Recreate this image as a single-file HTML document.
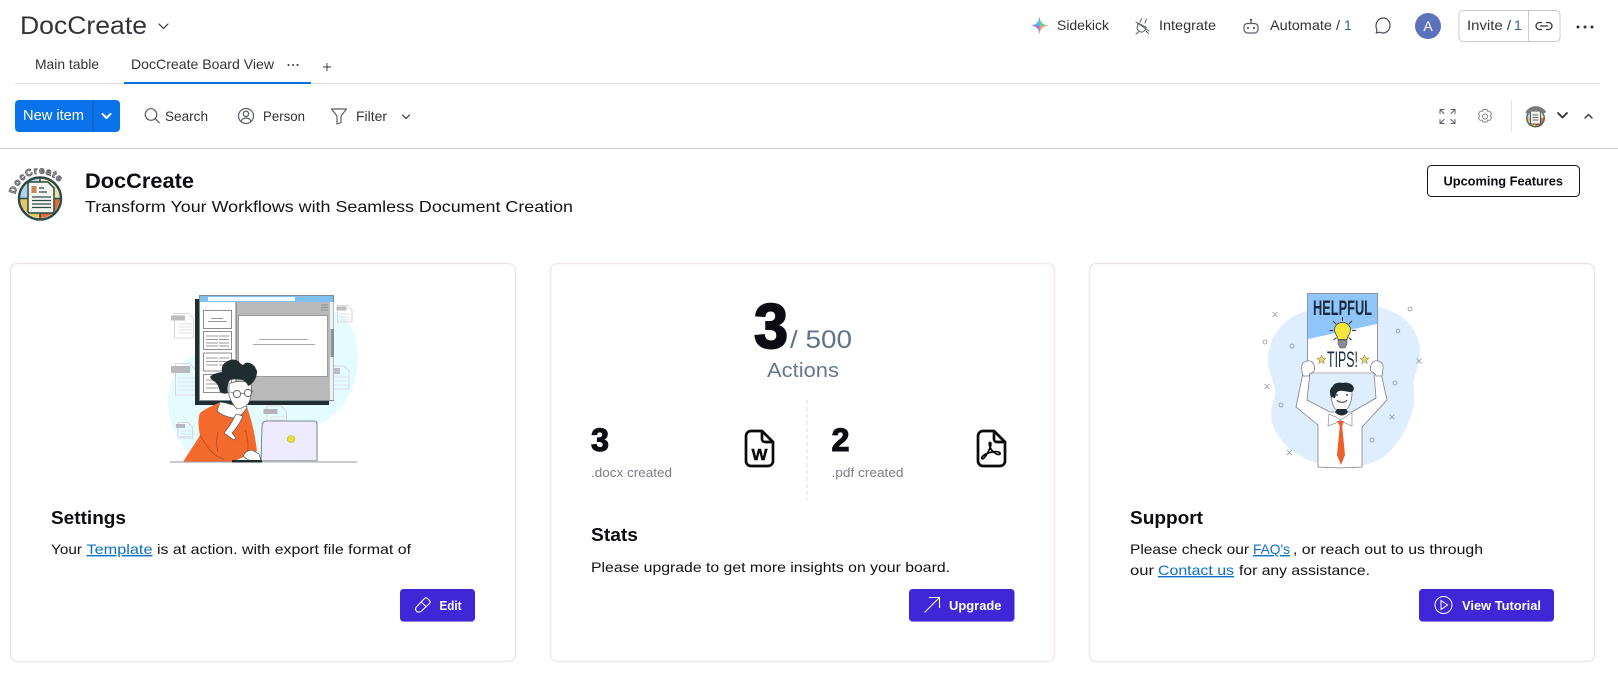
<!DOCTYPE html>
<html lang="en">
<head>
<meta charset="utf-8">
<title>DocCreate</title>
<style>
html,body{margin:0;padding:0;background:#fff;width:1618px;height:686px;overflow:hidden}
svg{position:absolute;left:0;top:0;display:block}
text{font-family:"Liberation Sans",sans-serif;fill:#323338;white-space:pre}
.s{fill:none;stroke:#5b5d68;stroke-width:1.2;stroke-linecap:round;stroke-linejoin:round}
.n{font-size:14px}
.b{font-size:14px;fill:#111118}
.h{font-size:18px;font-weight:700;fill:#0c0c14}
.l{font-size:14px;fill:#0d70c5;text-decoration:underline}
.w{font-size:12.5px;font-weight:700;fill:#fff}
.g{fill:none;stroke:#d5c9d8;stroke-width:.8}
.dl{stroke:#dcd6e0;stroke-width:.8}
</style>
</head>
<body>
<svg width="1618" height="686" viewBox="0 0 1618 686" xmlns="http://www.w3.org/2000/svg">
<rect width="1618" height="686" fill="#fff"/>

<!-- header -->
<text x="20" y="34" font-size="25" textLength="127" lengthAdjust="spacingAndGlyphs">DocCreate</text>
<path d="M159 24l4.500 4.500 4.500-4.500" class="s" style="stroke:#323338"/>

<path d="M1039.500 17c.8 5.500 2.800 7.600 8.500 8.500-5.700.9-7.700 3-8.500 8.500-.8-5.500-2.800-7.600-8.500-8.500 5.700-.9 7.700-3 8.500-8.500z" fill="#8f7be8"/>
<path d="M1039.500 17c.8 5.500 2.800 7.600 8.500 8.500h-8.500z" fill="#52cf9a"/>
<path d="M1048 25.500c-5.700.9-7.700 3-8.500 8.500v-8.500z" fill="#f79a6a"/>
<path d="M1039.500 17c-.8 5.500-2.800 7.600-8.500 8.500h8.500z" fill="#5fb0f5"/>
<text x="1057" y="30" class="n" textLength="52" lengthAdjust="spacingAndGlyphs">Sidekick</text>

<path d="M1141.500 19l-1.500 3M1146.500 19l-1.500 4M1138 23l8.500 4.500-2 3c-1.300 1.800-3.500 2-5 1s-3-2.800-2.200-4.600zM1136 22l13 9M1138.500 32l-2.500 2M1146 31l2.500 2.500" class="s" style="stroke-width:1"/>
<text x="1159" y="30" class="n" textLength="57" lengthAdjust="spacingAndGlyphs">Integrate</text>

<rect x="1244" y="23.500" width="14" height="9.500" rx="3.500" class="s"/>
<path d="M1251 23.500v-2.500" class="s"/><circle cx="1251" cy="20" r="1.200" fill="#5b5d68"/>
<circle cx="1248" cy="28" r="1.100" fill="#5b5d68"/><circle cx="1254" cy="28" r="1.100" fill="#5b5d68"/>
<text x="1270" y="30" class="n" textLength="70" lengthAdjust="spacingAndGlyphs">Automate /</text>
<text x="1344" y="30" class="n" style="fill:#30659b">1</text>

<path d="M1376 26c0-4.500 3.200-8 7.200-8s6.800 3.300 6.800 7.500-3.200 7.500-7 7.500c-1.300 0-2.300-.3-3.200-.8l-3.600.8.800-3c-.6-1-1-2.500-1-4z" class="s" style="stroke:#4a4c56"/>

<circle cx="1428" cy="26" r="13" fill="#5c72bb"/>
<text x="1428" y="31" font-size="14" text-anchor="middle" style="fill:#fff">A</text>

<rect x="1459" y="10.500" width="101" height="31" rx="4" fill="#fff" stroke="#c9cad3"/>
<path d="M1528.500 11v30" stroke="#c9cad3"/>
<text x="1467" y="30" class="n" textLength="44" lengthAdjust="spacingAndGlyphs">Invite /</text>
<text x="1514" y="30" class="n" style="fill:#30659b">1</text>
<path d="M1541.500 22.500h-2a3.500 3.500 0 0 0 0 7h2M1546.500 22.500h2a3.500 3.500 0 0 1 0 7h-2M1540.500 26h7" fill="none" stroke="#323338" stroke-width="1.300" stroke-linecap="round"/>

<circle cx="1578" cy="27" r="1.500" fill="#323338"/><circle cx="1585" cy="27" r="1.500" fill="#323338"/><circle cx="1592" cy="27" r="1.500" fill="#323338"/>

<!-- tabs -->
<text x="35" y="69" class="n" textLength="64" lengthAdjust="spacingAndGlyphs">Main table</text>
<text x="131" y="69" class="n" textLength="143" lengthAdjust="spacingAndGlyphs">DocCreate Board View</text>
<circle cx="288.500" cy="65" r="1" fill="#323338"/><circle cx="293" cy="65" r="1" fill="#323338"/><circle cx="297.500" cy="65" r="1" fill="#323338"/>
<path d="M327 63v8M323 67h8" stroke="#323338" stroke-width=".9"/>
<rect x="15" y="83" width="1585" height="1" fill="#dcdbe0"/>
<rect x="124" y="82" width="187" height="2" fill="#0f6fd8"/>

<!-- toolbar -->
<rect x="15" y="100" width="105" height="32" rx="4" fill="#0a73eb"/>
<rect x="92.500" y="100" width="1" height="32" fill="#0a5fc2"/>
<text x="23" y="120" font-size="14.500" textLength="61" lengthAdjust="spacingAndGlyphs" style="fill:#fff">New item</text>
<path d="M102.500 114l4 4 4-4" fill="none" stroke="#fff" stroke-width="2" stroke-linecap="round" stroke-linejoin="round"/>

<circle cx="151" cy="114.500" r="5.800" class="s"/><path d="M155.300 118.800l4 4" class="s"/>
<text x="165" y="121" class="n" textLength="43" lengthAdjust="spacingAndGlyphs">Search</text>
<circle cx="246" cy="116" r="7.500" class="s"/><circle cx="246" cy="113.800" r="2.700" class="s"/><path d="M241 121.500c.8-2.500 2.500-3.500 5-3.500s4.200 1 5 3.500" class="s"/>
<text x="263" y="121" class="n" textLength="42" lengthAdjust="spacingAndGlyphs">Person</text>
<path d="M331.500 109h15l-5.500 7v6.500l-4 1.500v-8z" class="s"/>
<text x="356" y="121" class="n" textLength="31" lengthAdjust="spacingAndGlyphs">Filter</text>
<path d="M402.500 115l3.500 3.500 3.500-3.500" class="s" style="stroke:#323338"/>

<path d="M1440 113.500v-4h4M1440.500 110l3.500 3.500M1455 113.500v-4h-4M1454.500 110l-3.500 3.500M1440 119.500v4h4M1440.500 123l3.500-3.500M1455 119.500v4h-4M1454.500 123l-3.500-3.500" class="s" style="stroke:#5b5d68;stroke-width:1"/>
<path d="M1483 109.500h4l.7 2 2-.5 2 3-1.500 1.700 1.500 1.800-2 3-2-.5-.7 2h-4l-.7-2-2 .5-2-3 1.500-1.800-1.500-1.700 2-3 2 .5z" class="s" style="stroke:#7d7f88;stroke-width:.9"/><circle cx="1485" cy="116.500" r="2.500" class="s" style="stroke:#7d7f88;stroke-width:.9"/>
<rect x="1511" y="100" width="1" height="32" fill="#e2e1e6"/>

<circle cx="1535.500" cy="118" r="9.500" fill="#4f6b62"/>
<path d="M1535.500 118v-8a8 8 0 0 0-8 8z" fill="#b6d5e8"/><path d="M1535.500 118v-8a8 8 0 0 1 8 8z" fill="#e8dcb0"/><path d="M1535.500 118v8a8 8 0 0 1-8-8z" fill="#e3c65e"/><path d="M1535.500 118v8a8 8 0 0 0 8-8z" fill="#e26b38"/>
<rect x="1530.500" y="111" width="10" height="13" rx="1" fill="#f3f3ee" stroke="#334" stroke-width=".8"/><path d="M1532.500 115h6M1532.500 117.500h6M1532.500 120h6" stroke="#334" stroke-width=".8"/>
<path d="M1527 113.500a10 10 0 0 1 17.500-.5" fill="none" stroke="#7b7b7b" stroke-width="4"/>
<path d="M1558 113l4.500 4.500 4.500-4.500" fill="none" stroke="#323338" stroke-width="1.800" stroke-linecap="round" stroke-linejoin="round"/>
<path d="M1585 118l3.500-3.500 3.500 3.500" fill="none" stroke="#323338" stroke-width="1.400" stroke-linecap="round" stroke-linejoin="round"/>
<rect x="0" y="148" width="1618" height="1" fill="#cfc9d2"/>

<!-- app header -->
<circle cx="40" cy="198.500" r="21" fill="#fff" stroke="#2f4a45" stroke-width="2.500"/>
<path d="M40 198.500v-19.500a19.500 19.500 0 0 0-19.500 19.500z" fill="#a9d4ec"/>
<path d="M40 198.500v-19.500a19.500 19.500 0 0 1 19.500 19.500z" fill="#ecdfae"/>
<path d="M40 198.500v19.500a19.500 19.500 0 0 1-19.500-19.500z" fill="#e7c860"/>
<path d="M40 198.500v19.500a19.500 19.500 0 0 0 19.500-19.500z" fill="#e56a33"/>
<path d="M40 177.500v42M19 198.500h42" stroke="#2f4a45" stroke-width="1.500"/>
<path d="M30 182h18l6 6v23a2 2 0 0 1-2 2H30a2 2 0 0 1-2-2v-27a2 2 0 0 1 2-2z" fill="#f4f4f0" stroke="#2f4a45" stroke-width="1.500"/>
<rect x="31.500" y="186" width="5" height="7" fill="#c9855a"/>
<path d="M39 188h5M39 192h8M32 197h19M32 200.500h19M32 204h19M32 207.500h19" stroke="#2f4a45" stroke-width="1.300"/>
<path id="logoarc" d="M15.400 194.200A25 25 0 0 1 59.200 182.500" fill="none"/>
<text font-size="9.500" font-weight="700" style="fill:#e4e4e4;stroke:#6a6a70;stroke-width:1"><textPath href="#logoarc" textLength="56" lengthAdjust="spacing">DocCreate</textPath></text>

<text x="85" y="188" font-size="21" font-weight="700" textLength="109" lengthAdjust="spacingAndGlyphs" style="fill:#0c0c14">DocCreate</text>
<text x="85" y="212" font-size="16" textLength="488" lengthAdjust="spacingAndGlyphs" style="fill:#111118">Transform Your Workflows with Seamless Document Creation</text>
<rect x="1427.500" y="165.500" width="152" height="31" rx="4" fill="#fff" stroke="#16161c"/>
<text x="1443.500" y="185.500" font-size="12.500" font-weight="700" textLength="119.500" lengthAdjust="spacingAndGlyphs" style="fill:#0c0c14">Upcoming Features</text>

<!-- cards -->
<rect x="10.500" y="263.500" width="505" height="398" rx="7" fill="#fff" stroke="#ece6ec" stroke-width="1.400"/>
<rect x="550.500" y="263.500" width="504" height="398" rx="7" fill="#fff" stroke="#f2e4f0" stroke-width="1.400"/>
<rect x="1089.500" y="263.500" width="505" height="398" rx="7" fill="#fff" stroke="#ece6ec" stroke-width="1.400"/>

<!-- settings illustration -->
<path d="M345 318c12 14 15 32 12 52-3 22-14 38-30 50-8 5-22 12-34 14l-20 28h-72c-20-12-33-36-33-60 0-20 10-38 30-50 30-20 70-22 95-30 20-6 40-18 52-4z" fill="#e4fcfe"/>
<g>
<path class="g" d="M174.500 313.500h14l5 5v19.500h-19z" fill="#fff"/><rect x="171" y="315.500" width="14" height="5" fill="#bdbcc2"/><path class="dl" d="M178 324h14M178 327h14M178 330h14M178 333h14"/>
<path class="g" d="M337.500 305.500h10l4.500 4.500v12h-14.500z"/><rect x="336.500" y="306.500" width="10" height="4" fill="#bdbcc2"/><path class="dl" d="M340 314h10M340 317h10M340 320h10"/>
<path class="g" d="M175.500 363.500h14l6 6v25.500h-20z"/><rect x="171" y="366" width="19" height="7" fill="#b9b8bf"/><path class="dl" d="M178 378h17M178 382h17M178 386h17M178 390h17"/>
<path class="g" d="M333 366h11l5 5v18h-16z"/><rect x="333" y="368" width="7" height="6" fill="#bdbcc2"/><path class="dl" d="M334 377h14M334 381h14M334 385h14"/>
<path class="g" d="M267 406h14l5.500 5.500V424H267z"/><rect x="263.500" y="409" width="14" height="5" fill="#b3b3ba"/><path class="dl" d="M270 417h15M270 420h15"/>
<path class="g" d="M178 422.500h10l4.500 4.500v11h-14.500z"/><rect x="176" y="424" width="9" height="4" fill="#b6b6bc"/><path class="dl" d="M180 431h11M180 434h11M180 436.500h11"/>
</g>
<rect x="195" y="299" width="134" height="106" fill="#1f2d2e"/>
<rect x="199.500" y="295.500" width="134" height="105" fill="#fff" stroke="#7b8d92"/>
<rect x="200" y="296" width="133" height="6" fill="#7fc0f2"/>
<rect x="208" y="297" width="87" height="4" fill="#effaff"/>
<rect x="235" y="302" width="95" height="98" fill="#b9b9b9"/>
<rect x="236" y="302" width="1" height="98" fill="#8c9599"/>
<rect x="238.500" y="315.500" width="89" height="61" fill="#fff" stroke="#9a9a9a"/>
<path d="M259 339.500h49M253 344.500h62" stroke="#aaa" stroke-width="1"/>
<path d="M321 305h7M321 307.500h7M321 310h7" stroke="#8d8d8d"/>
<rect x="330.500" y="302" width="3" height="98" fill="#eceff0"/>
<rect x="330.500" y="329" width="3" height="28" fill="#8a9396"/>
<g fill="#fff" stroke="#8e8e8e">
<rect x="203.500" y="310.500" width="28" height="18"/><rect x="203.500" y="331.500" width="28" height="18"/><rect x="203.500" y="353" width="28" height="18"/><rect x="203.500" y="374.500" width="28" height="18"/>
</g>
<path d="M211 318.500h12M208 321.500h19M206 336h12M219 336h10M206 339.500h12M219 339.500h10M206 343h12M219 343h10M206 346h12M219 346h10M206 358h12M219 358h10M206 361.500h12M219 361.500h10M206 365h12M219 365h10M206 380h12M206 384h12M206 388h12" stroke="#999" stroke-width="1"/>

<!-- person -->
<path d="M183 462c6-10 12-18 17-27-2-8-2-17 0-22 6-5 13-7 20-11l27 5c5 14 8 28 10 44l-25 11z" fill="#f46a2d"/>
<path d="M200 435c8 14 14 22 24 24M245 430c3 8 4 16 2 24M218 432c-2 8-2 14 0 20" fill="none" stroke="#a8451a" stroke-width=".7"/>
<path d="M220 402l-3 9c4 4 11 6 16 7 7-1 12-6 14-11l-5-3-10 1-6-2z" fill="#fff" stroke="#555" stroke-width=".7"/>
<path d="M236 414c-3 6-6 12-12 19l10 7 2-2-4-5c5-5 8-10 11-17z" fill="#fff" stroke="#555" stroke-width=".7"/>
<path d="M229 384c5-3 16-4 22 0 1 8 0 17-4 21-3 2-7 4-10 4-3-3-6-8-8-13z" fill="#fff" stroke="#555" stroke-width=".7"/>
<path d="M210 377c2-3 7-4 12-5-1-5 1-9 6-11 3-2 7-2 10 0 2 2 4 4 5 4 2-3 6-3 9-1 3 2 4 5 5 7 0 4-1 7-3 10-2 3-4 4-6 5-1-3-3-5-5-6-4-1-9-1-13 0-2 3-3 8-2 13-3 1-5 1-8-1-1-4-2-8-5-10-2-1-4-3-5-5z" fill="#1f2d2e"/>
<circle cx="237" cy="394" r="3.600" fill="none" stroke="#666" stroke-width="1"/><circle cx="248" cy="393" r="3.600" fill="none" stroke="#666" stroke-width="1"/>
<path d="M240.500 393.500h4M233.500 393l-3-1M251.500 392l1.500-1" stroke="#666" stroke-width=".8"/>
<path d="M261 461l1-34c0-4 2-6 5-6h47c2 0 3 1 3 3v37z" fill="#edebfd" stroke="#5f6a70" stroke-width=".8"/>
<ellipse cx="291" cy="439" rx="3.800" ry="3.500" fill="#ecdc30" stroke="#b9b04c" stroke-width=".6"/>
<path d="M243 456c2-4 6-6 9-6l7 4 2 6-6 1c-5 0-9-2-12-5z" fill="#fff" stroke="#555" stroke-width=".7"/>
<rect x="170" y="461.500" width="187" height="1" fill="#9a9a9e"/>
<rect x="232" y="460" width="30" height="2.500" fill="#1f2d2e"/>
<rect x="262" y="460" width="55" height="2.500" fill="#aeb2b6"/>

<!-- settings text -->
<text x="51" y="524" class="h" textLength="75" lengthAdjust="spacingAndGlyphs">Settings</text>
<text x="51" y="554" class="b" textLength="31" lengthAdjust="spacingAndGlyphs">Your</text>
<text x="86.500" y="554" class="l" textLength="66" lengthAdjust="spacingAndGlyphs">Template</text>
<text x="157" y="554" class="b" textLength="254" lengthAdjust="spacingAndGlyphs">is at action. with export file format of</text>

<rect x="400" y="590" width="75" height="32" rx="3.500" fill="#8f82e8"/>
<rect x="400" y="589" width="75" height="32" rx="3.500" fill="#3f26d6"/>
<path d="M424.500 598.500a2 2 0 0 1 3 0l2 2a2 2 0 0 1 0 3l-8 7.500a4 4 0 0 1-4.500.6 3 3 0 0 1-.9-4.300zM421 602l5 4.500" fill="none" stroke="#fff" stroke-width="1.100" stroke-linejoin="round"/>
<text x="439.500" y="610" class="w" textLength="22" lengthAdjust="spacingAndGlyphs">Edit</text>

<!-- stats -->
<text x="754" y="348" font-size="63" font-weight="700" textLength="34" lengthAdjust="spacingAndGlyphs" style="fill:#0d0c12;stroke:#0d0c12;stroke-width:2">3</text>
<text x="790" y="348" font-size="25" textLength="62" lengthAdjust="spacingAndGlyphs" style="fill:#5f7388">/ 500</text>
<text x="767" y="377" font-size="20.500" textLength="72" lengthAdjust="spacingAndGlyphs" style="fill:#66788c">Actions</text>
<path d="M807 400v100" stroke="#dedede" stroke-dasharray="4 3"/>

<text x="591" y="451" font-size="32" font-weight="700" textLength="18" lengthAdjust="spacingAndGlyphs" style="fill:#0d0c12;stroke:#0d0c12;stroke-width:1.100">3</text>
<text x="591" y="477" font-size="12.500" textLength="81" lengthAdjust="spacingAndGlyphs" style="fill:#7b7c88">.docx created</text>
<path d="M746 436a5 5 0 0 1 5-5h11l11 11v19a5 5 0 0 1-5 5h-17a5 5 0 0 1-5-5zM762 431.500v7.500a3 3 0 0 0 3 3h8" fill="none" stroke="#0a0a0a" stroke-width="2.700" stroke-linejoin="round"/>
<text x="751.500" y="460" font-size="15.500" font-weight="700" textLength="16" lengthAdjust="spacingAndGlyphs" style="fill:#0a0a0a;stroke:#0a0a0a;stroke-width:.4">W</text>

<text x="831.500" y="451" font-size="32" font-weight="700" textLength="18" lengthAdjust="spacingAndGlyphs" style="fill:#0d0c12;stroke:#0d0c12;stroke-width:1.100">2</text>
<text x="831.500" y="477" font-size="12.500" textLength="72" lengthAdjust="spacingAndGlyphs" style="fill:#7b7c88">.pdf created</text>
<path d="M978 436a5 5 0 0 1 5-5h11l11 11v19a5 5 0 0 1-5 5h-17a5 5 0 0 1-5-5zM994 431.500v7.500a3 3 0 0 0 3 3h8" fill="none" stroke="#0a0a0a" stroke-width="2.700" stroke-linejoin="round"/>
<path d="M990 447c-1-2.500-1-4.500 0-4.500s1.500 2 0 5.500c-1.500 3.500-3.500 7.500-6 10-1.500 1.500-3 .5-2-1 1.500-2 5.500-4 10-5 3-.6 7-.5 8 1 .8 1.500-2 2-4 .8-3-1.800-5-4-6-6.800z" fill="none" stroke="#0a0a0a" stroke-width="1.700" stroke-linejoin="round"/>

<text x="591" y="541" class="h" textLength="47" lengthAdjust="spacingAndGlyphs">Stats</text>
<text x="591" y="572" class="b" textLength="359" lengthAdjust="spacingAndGlyphs">Please upgrade to get more insights on your board.</text>
<rect x="909" y="590" width="105.500" height="32" rx="3.500" fill="#8f82e8"/>
<rect x="909" y="589" width="105.500" height="32" rx="3.500" fill="#3f26d6"/>
<path d="M924.500 612.500l15-15M929 597.500h10.500V608" fill="none" stroke="#fff" stroke-width="1.100"/>
<text x="949" y="610" class="w" textLength="52.500" lengthAdjust="spacingAndGlyphs">Upgrade</text>

<!-- support illustration -->
<path d="M1330 307c14-3 30-3 48 0 20 4 36 16 41 35 3 14-2 26-5 38-2 10 3 18-2 32-4 16-14 34-30 46-15 10-40 11-62 6-20-5-38-18-46-36-6-14-1-24 1-34 1-10-7-20-7-34 0-18 10-36 28-45 10-5 22-6 34-8z" fill="#deeeff"/>
<g fill="none" stroke="#8b95a1" stroke-width=".8">
<path d="M1272.500 312l5 5M1277.500 312l-5 5M1264.500 384l5 5M1269.500 384l-5 5M1287 450l5 5M1292 450l-5 5M1389.500 414.500l5 5M1394.500 414.500l-5 5M1416.500 358.500l5 5M1421.500 358.500l-5 5"/>
<circle cx="1265" cy="342" r="2"/><circle cx="1292" cy="346" r="2"/><circle cx="1281" cy="405" r="2"/><circle cx="1395" cy="383" r="2"/><circle cx="1372" cy="440" r="2"/><circle cx="1410" cy="309" r="2"/><circle cx="1398" cy="331" r="1.800"/>
</g>
<path d="M1318 425l-22-18 7-34h7l-3 27 23 12h22l24-14-2-25h7l6 27-25 27v40l-22 1-22-1z" fill="#fff" stroke="#7c8087" stroke-width=".8"/>
<rect x="1307.500" y="293.500" width="70" height="79.500" fill="#fff" stroke="#8e96a2"/>
<path d="M1308 294h69v30l-69 15z" fill="#90c5fa"/>
<rect x="1307.500" y="372" width="71" height="2" fill="#d3d3dc"/>
<text x="1313" y="315" font-size="21" font-weight="700" textLength="59" lengthAdjust="spacingAndGlyphs" style="fill:#1c2b3b">HELPFUL</text>
<text x="1327" y="367" font-size="22" textLength="31" lengthAdjust="spacingAndGlyphs" style="fill:#1c2b3b">TIPS!</text>
<path d="M1342.500 317v4M1333 321l3 3M1352 321l-3 3M1329.500 330.500h3.500M1352 330.500h4M1333.500 340l3-2.500M1351.500 340l-3-2.500" stroke="#2a2f3a" stroke-width="1"/>
<path d="M1342.500 322.500c4.800 0 8 3.400 8 7.500 0 3.500-3 5.500-3.500 9.500h-9c-.5-4-3.500-6-3.500-9.500 0-4.100 3.200-7.500 8-7.500z" fill="#f7e63a" stroke="#333" stroke-width=".7"/>
<path d="M1338 340h9v4l-2 4h-5l-2-4z" fill="#8a8d93" stroke="#444" stroke-width=".5"/>
<path d="M1321.500 355l1.200 3 3.300.2-2.500 2.200.8 3.200-2.800-1.800-2.800 1.800.8-3.200-2.500-2.200 3.300-.2zM1364.500 355l1.200 3 3.300.2-2.500 2.200.8 3.200-2.800-1.800-2.800 1.800.8-3.200-2.500-2.200 3.300-.2z" fill="#edd36a" stroke="#776" stroke-width=".5"/>
<path d="M1303 376c-1-4-2-8-1-11 0-3 3-3 5-4 3-1 6 1 7 4 1 2 1 6-1 7-2 1-4 2-4 4z" fill="#fff" stroke="#7c8087" stroke-width=".8"/>
<path d="M1382 376c1-4 1-8 1-11-1-3-3-3-5-4-3-1-6 1-7 4-1 2-1 6 1 7 2 1 4 2 4 4z" fill="#fff" stroke="#7c8087" stroke-width=".8"/>
<path d="M1331 393c0-4 5-7 11-7 5 0 9 2 10 7 0 9-4 19-11 19-6 0-10-8-10-19z" fill="#fff" stroke="#666" stroke-width=".7"/>
<path d="M1335 412c2 3 9 6 13 0l-2-3h-9z" fill="#1f2b33"/>
<path d="M1331 397c-2-5-1-9 2-11 1-3 6-4 10-3 3-1 8 0 10 3 2 3 0 6-2 6-4 0-8-2-12-1-3 1-3 4-4 7z" fill="#1f2b33"/>
<circle cx="1337" cy="395" r=".9" fill="#222"/><circle cx="1347" cy="395" r=".9" fill="#222"/>
<path d="M1337 400c2 3 8 3 10 0" fill="none" stroke="#333"/>
<path d="M1329 414l-1 12 8-3 4-3 5 3 7 3 0-13-7 4-4 3-5-3z" fill="#fff" stroke="#8a8d93" stroke-width=".7"/>
<path d="M1337 421h7l-1.800 5 2.800 29-4 10-4-10 2.800-29z" fill="#ee5f2b"/>

<!-- support text -->
<text x="1130" y="524" class="h" textLength="73" lengthAdjust="spacingAndGlyphs">Support</text>
<text x="1130" y="554" class="b" textLength="119" lengthAdjust="spacingAndGlyphs">Please check our</text>
<text x="1253" y="554" class="l" textLength="37" lengthAdjust="spacingAndGlyphs">FAQ's</text>
<text x="1293" y="554" class="b" textLength="190" lengthAdjust="spacingAndGlyphs">, or reach out to us through</text>
<text x="1130" y="575" class="b" textLength="24" lengthAdjust="spacingAndGlyphs">our</text>
<text x="1158" y="575" class="l" textLength="76" lengthAdjust="spacingAndGlyphs">Contact us</text>
<text x="1239" y="575" class="b" textLength="131" lengthAdjust="spacingAndGlyphs">for any assistance.</text>

<rect x="1419" y="590" width="135" height="32" rx="3.500" fill="#8f82e8"/>
<rect x="1419" y="589" width="135" height="32" rx="3.500" fill="#3f26d6"/>
<circle cx="1443.500" cy="605" r="8.500" fill="none" stroke="#fff" stroke-width="1"/>
<path d="M1441 600.500l6.500 4.500-6.500 4.500z" fill="none" stroke="#fff" stroke-width="1"/>
<text x="1462" y="610" class="w" textLength="79" lengthAdjust="spacingAndGlyphs">View Tutorial</text>
</svg>
</body>
</html>
